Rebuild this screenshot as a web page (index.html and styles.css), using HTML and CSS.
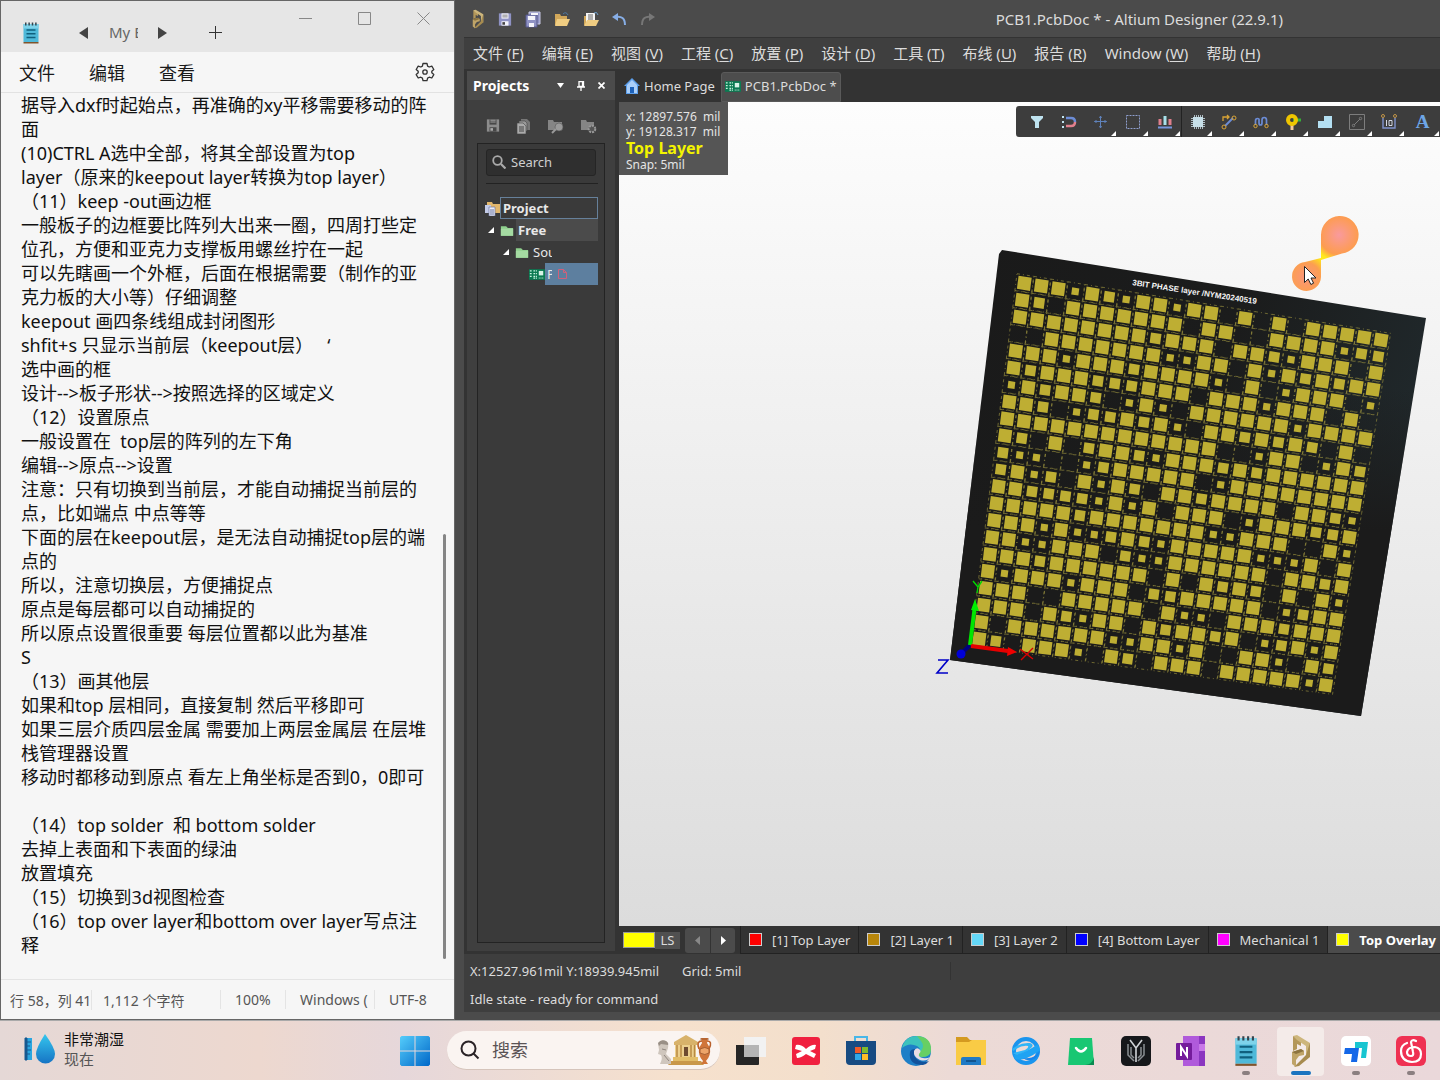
FILE: index.html
```html
<!DOCTYPE html>
<html lang="zh-CN">
<head>
    <meta charset="UTF-8">
    <meta name="viewport" content="width=device-width, initial-scale=1.0">
    <title>PCB1.PcbDoc * - Altium Designer (22.9.1)</title>
    <link rel="stylesheet" href="styles.css">
</head>
<body>

<!-- shared icons -->
<svg class="defs" width="0" height="0">
    <defs>
        <symbol id="i-floppy" viewBox="0 0 16 16"><path d="M1 1h14v14H1z" fill="#8f92c4"/><path d="M4 1h8v6H4z" fill="#f4f4fa"/><path d="M4 10h8v5H4z" fill="#f4f4fa"/><path d="M5 11h3v3H5z" fill="#444"/><path d="M5 3h6M5 5h6" stroke="#777" stroke-width="1"/></symbol>
        <symbol id="i-floppy-gray" viewBox="0 0 16 16"><path d="M1 1h14v14H1z" fill="#8c8c8c"/><path d="M4 1h8v6H4z" fill="#484848"/><path d="M5 2h6M5 4h6" stroke="#aaa"/><path d="M4 10h8v5H4z" fill="#484848"/><path d="M5 11h3v3H5z" fill="#aaa"/></symbol>
        <symbol id="i-altium" viewBox="0 0 24 32"><path d="M4 1l8 3v7l-4-2v5l-4 2z" fill="#b3975a"/><path d="M4 1l4-1 13 8v14l-4-2V11L8 5z" fill="#cdb67c"/><path d="M21 8v14l-11 9-5 1 12-12z" fill="#a78c50"/><path d="M3 17l9-3 3 2v4l-5 1-3 4v7l-4-3z" fill="#bfa468"/><path d="M3 17l9-3 3 2-8 3z" fill="#8c7440"/></symbol>
        <symbol id="i-board" viewBox="0 0 18 14"><path d="M0 1h18v12H0z" fill="#0b7a52"/><path d="M1 3h3M1 6h3M1 9h3M5 3h4M5 6h4M5 9h4M5 11h4" stroke="#c9f5df" stroke-width="1.4" stroke-dasharray="2 1"/><path d="M11 3h5v5h-5z" fill="#d8f3e7"/><path d="M11 11h6" stroke="#fff" stroke-dasharray="1 1"/></symbol>
        <symbol id="i-folder" viewBox="0 0 16 14"><path d="M1 2h6l2 2h6v9H1z" fill="#8fd08d"/><path d="M1 5h14v8H1z" fill="#a5dba2"/></symbol>
        <symbol id="i-notepad" viewBox="0 0 24 32"><path d="M2 4h20v24H2z" fill="#4fb9d9"/><path d="M2 4h20v6H2z" fill="#7ed3ea"/><path d="M2 28h20v2H2z" fill="#80542c"/><path d="M6 12h12M6 17h12M6 22h12" stroke="#10607e" stroke-width="2"/><path d="M5 2v4M9.500 2v4M14 2v4M18.500 2v4" stroke="#33444e" stroke-width="2"/></symbol>
    </defs>
</svg>

<div class="desktop">
    <section class="notepad">
        <header class="np-title">
            <svg class="np-logo" width="18" height="24"><use href="#i-notepad"/></svg>
            <button class="np-btn" aria-label="Previous"><svg width="9" height="12"><path d="M9 0v12L0 6z" fill="#444"/></svg></button>
            <span class="np-tab">My E</span>
            <button class="np-btn" aria-label="Next"><svg width="9" height="12"><path d="M0 0v12l9-6z" fill="#444"/></svg></button>
            <button class="np-btn np-plus" aria-label="New tab"><svg width="13" height="13"><path d="M6.500 0v13M0 6.500h13" stroke="#333"/></svg></button>
            <div class="np-controls">
                <button class="np-btn" aria-label="Minimize"><svg width="13" height="13"><path d="M0 6.500h13" stroke="#888"/></svg></button>
                <button class="np-btn" aria-label="Maximize"><svg width="13" height="13"><path d="M.5.5h12v12H.5z" fill="none" stroke="#888"/></svg></button>
                <button class="np-btn" aria-label="Close"><svg width="13" height="13"><path d="M.5.5l12 12M12.500.5l-12 12" stroke="#888"/></svg></button>
            </div>
        </header>
        <nav class="np-menu">
            <button>文件</button>
            <button>编辑</button>
            <button>查看</button>
            <button class="np-gear" aria-label="Settings"><svg width="20" height="20" viewBox="0 0 20 20" fill="none" stroke="#333" stroke-width="1.3" stroke-linejoin="round"><path d="M8 1.500h4l.6 2.600 1.600.9 2.600-.9 2 3.400-2 1.800v1.500l2 1.800-2 3.400-2.600-.8-1.600.9-.6 2.500H8l-.6-2.500-1.600-.9-2.600.8-2-3.400 2-1.800V9.300l-2-1.800 2-3.400 2.600.9 1.600-.9z"/><circle cx="10" cy="10" r="2.200"/></svg></button>
        </nav>
        <div class="np-body">
            <textarea class="np-text" aria-label="Text" spellcheck="false" wrap="off">据导入dxf时起始点，再准确的xy平移需要移动的阵
面
(10)CTRL A选中全部，将其全部设置为top
layer（原来的keepout layer转换为top layer）
（11）keep -out画边框
一般板子的边框要比阵列大出来一圈，四周打些定
位孔，方便和亚克力支撑板用螺丝拧在一起
可以先瞎画一个外框，后面在根据需要（制作的亚
克力板的大小等）仔细调整
keepout 画四条线组成封闭图形
shfit+s 只显示当前层（keepout层）   ‘
选中画的框
设计--&gt;板子形状--&gt;按照选择的区域定义
（12）设置原点
一般设置在  top层的阵列的左下角
编辑--&gt;原点--&gt;设置
注意：只有切换到当前层，才能自动捕捉当前层的
点，比如端点 中点等等
下面的层在keepout层，是无法自动捕捉top层的端
点的
所以，注意切换层，方便捕捉点
原点是每层都可以自动捕捉的
所以原点设置很重要 每层位置都以此为基准
S
（13）画其他层
如果和top 层相同，直接复制 然后平移即可
如果三层介质四层金属 需要加上两层金属层 在层堆
栈管理器设置
移动时都移动到原点 看左上角坐标是否到0，0即可

（14）top solder  和 bottom solder
去掉上表面和下表面的绿油
放置填充
（15）切换到3d视图检查
（16）top over layer和bottom over layer写点注
释</textarea>
            <div class="np-thumb"></div>
        </div>
        <footer class="np-status">
            <span class="st-pos">行 58，列 41</span>
            <span class="st-count">1,112 个字符</span>
            <span class="st-zoom">100%</span>
            <span class="st-eol">Windows (</span>
            <span class="st-enc">UTF-8</span>
        </footer>
    </section>

    <section class="altium">
        <header class="al-title">
            <div class="al-quick">
                <svg width="14" height="20"><use href="#i-altium"/></svg>
                <button aria-label="Save"><svg width="14" height="15"><use href="#i-floppy"/></svg></button>
                <button aria-label="Save all"><svg width="16" height="17" viewBox="0 0 16 17"><path d="M4 1h11v12H4z" fill="#8f92c4" stroke="#c9cae6"/><path d="M1 4h11v12H1z" fill="#8f92c4" stroke="#55578a"/><path d="M6 2h7v2H6zM3 5h7v4H3zM4 12h5v4H4z" fill="#f4f4fa"/></svg></button>
                <button aria-label="Open"><svg width="16" height="16" viewBox="0 0 16 16"><path d="M1 3h5l1 2h6v9H1z" fill="#d2a85a"/><path d="M3 8h13l-3 7H1z" fill="#f0cd82"/><path d="M9 3q3-3 5 1" fill="none" stroke="#4c7aa5"/></svg></button>
                <button aria-label="Open project"><svg width="16" height="16" viewBox="0 0 16 16"><path d="M1 5h4v9H1z" fill="#d2a85a"/><path d="M3 2h9v9H3z" fill="#f6f6f6"/><path d="M5 4h5M5 6h5M5 8h5" stroke="#666"/><path d="M4 9h12l-3 6H1z" fill="#f0cd82"/><path d="M11 2q3-2 4 2" fill="none" stroke="#6fa2d0"/></svg></button>
                <button aria-label="Undo"><svg width="15" height="13" viewBox="0 0 15 13"><path d="M3 4q10-2 10 8" fill="none" stroke="#87aee6" stroke-width="2"/><path d="M6 0v8L0 4z" fill="#87aee6"/></svg></button>
                <button aria-label="Redo"><svg width="15" height="13" viewBox="0 0 15 13"><path d="M12 4Q2 2 2 12" fill="none" stroke="#777" stroke-width="2"/><path d="M9 0v8l6-4z" fill="#777"/></svg></button>
            </div>
            <span class="al-name">PCB1.PcbDoc * - Altium Designer (22.9.1)</span>
        </header>
        <nav class="al-menu">
            <button>文件 (<u>F</u>)</button>
            <button>编辑 (<u>E</u>)</button>
            <button>视图 (<u>V</u>)</button>
            <button>工程 (<u>C</u>)</button>
            <button>放置 (<u>P</u>)</button>
            <button>设计 (<u>D</u>)</button>
            <button>工具 (<u>T</u>)</button>
            <button>布线 (<u>U</u>)</button>
            <button>报告 (<u>R</u>)</button>
            <button>Window (<u>W</u>)</button>
            <button>帮助 (<u>H</u>)</button>
        </nav>

        <div class="al-work">
            <aside class="panel">
                <div class="panel-head">
                    <h2>Projects</h2>
                    <button aria-label="Panel menu"><svg width="7" height="6"><path d="M0 0h7L3.500 5z" fill="#fff"/></svg></button>
                    <button aria-label="Pin"><svg width="8" height="10"><path d="M2 .5h4.500v5H2zM0 6h8M4 6v4M5.500 1v4" fill="none" stroke="#fff" stroke-width="1.300"/></svg></button>
                    <button aria-label="Close panel"><svg width="7" height="7"><path d="M.5.5l6 6M6.500.5l-6 6" stroke="#fff" stroke-width="1.700"/></svg></button>
                </div>
                <div class="panel-tools">
                    <button aria-label="Save document"><svg width="14" height="15"><use href="#i-floppy-gray"/></svg></button>
                    <button aria-label="Compile"><svg width="14" height="16" viewBox="0 0 14 16"><path d="M5 1h6l3 3v8H5z" fill="#777"/><path d="M3 3h6l2 2v8H3z" fill="#999" stroke="#444" stroke-width=".6"/><path d="M1 5h6l3 3v8H1z" fill="#aaa" stroke="#444" stroke-width=".6"/><path d="M3 9h5M3 11h5M3 13h5" stroke="#444"/></svg></button>
                    <button aria-label="Explore"><svg width="17" height="16" viewBox="0 0 17 16"><path d="M1 2h5l1 2h8v8H1z" fill="#858585"/><circle cx="12" cy="9" r="4" fill="#9a9a9a" stroke="#555" stroke-width=".6"/><path d="M9 11l-4 4" stroke="#999" stroke-width="2"/></svg></button>
                    <button aria-label="Project options"><svg width="17" height="16" viewBox="0 0 17 16"><path d="M1 2h5l1 2h7v8H1z" fill="#858585"/><circle cx="12" cy="11" r="3.300" fill="#555" stroke="#999" stroke-width="2" stroke-dasharray="2 1"/></svg></button>
                </div>
                <div class="tree">
                    <label class="search">
                        <svg width="14" height="14" viewBox="0 0 14 14" fill="none" stroke="#aaa"><circle cx="5.500" cy="5.500" r="4.300" stroke-width="1.800"/><path d="M9 9l4.500 4.500" stroke-width="2.200"/></svg>
                        <input type="text" placeholder="Search" aria-label="Search">
                    </label>
                    <ul class="tree-list">
                        <li class="lv0"><svg width="16" height="15" viewBox="0 0 16 15"><path d="M3 1h5l1 2h7v9H3z" fill="#e2b76c"/><path d="M1 4h6v8H1z" fill="#c3cbe8"/><path d="M5 6h6v9H5z" fill="#e9edfa" stroke="#6d77a0" stroke-width=".7"/><path d="M6 9h4M6 11h4M6 13h4" stroke="#6d77a0"/></svg><b class="node boxed">Project</b></li>
                        <li class="lv1"><svg class="arrow" width="6" height="6"><path d="M6 0v6H0z" fill="#fff"/></svg><svg width="14" height="13"><use href="#i-folder"/></svg><b class="node shaded">Free</b></li>
                        <li class="lv2"><svg class="arrow" width="6" height="6"><path d="M6 0v6H0z" fill="#fff"/></svg><svg width="14" height="13"><use href="#i-folder"/></svg><span class="node"><span class="cut-sou">Sou</span></span></li>
                        <li class="lv3"><svg width="16" height="13"><use href="#i-board"/></svg><span class="node picked"><span class="cut-p">P</span><svg width="9" height="10" viewBox="0 0 9 10"><path d="M.5.5h5l3 3v6h-8zM5.500.5v3h3" fill="none" stroke="#d0607a"/></svg></span></li>
                    </ul>
                </div>
            </aside>

            <main class="editor">
                <div class="doc-tabs">
                    <button class="doc-tab"><svg width="16" height="16" viewBox="0 0 16 16"><path d="M8 0L0 8h2v8h12V8h2z" fill="#5c9fec"/><path d="M8 2L3 7v8h10V7z" fill="#a9cffb"/><path d="M6 9h4v6H6z" fill="#1d62bb"/></svg>Home Page</button>
                    <button class="doc-tab active"><svg width="16" height="13"><use href="#i-board"/></svg>PCB1.PcbDoc *</button>
                </div>
                <div class="view">
                    <svg class="scene" viewBox="619 102 821 824" preserveAspectRatio="xMinYMin meet">
                        <defs>
                            <linearGradient id="boardFill" x1="0" y1="0" x2="1" y2="0.300">
                                <stop offset="0" stop-color="#1a1a1a"/><stop offset=".6" stop-color="#1b1c1c"/><stop offset="1" stop-color="#20282b"/>
                            </linearGradient>
                            <linearGradient id="boardShade" x1="0" y1="0" x2="0" y2="1">
                                <stop offset=".3" stop-color="#1b1b1b" stop-opacity="0"/><stop offset=".6" stop-color="#1b1b1b"/>
                            </linearGradient>
                            <radialGradient id="glow" gradientUnits="userSpaceOnUse" cx="1339" cy="235" r="26"><stop offset="0" stop-color="#f99a9d"/><stop offset=".75" stop-color="#fd9c4e"/><stop offset="1" stop-color="#ffe81c"/></radialGradient>
                            <radialGradient id="glow2" gradientUnits="userSpaceOnUse" cx="1306" cy="277" r="24"><stop offset="0" stop-color="#fa957c"/><stop offset=".6" stop-color="#fc9e52"/><stop offset="1" stop-color="#ffee10"/></radialGradient>
                        </defs>
                        <path d="M1002 250L1426 318 1361 716 950 660 999 254z" fill="url(#boardFill)"/>
                        <path d="M1002 250L1426 318 1361 716 950 660 999 254z" fill="url(#boardShade)"/>
                        <g id="cells"></g>
                        <text class="silk" transform="translate(1132 285) rotate(8.700)">3BIT PHASE layer /NYM20240519</text>
                        <g class="axes">
                            <path d="M970 645L962 653" stroke="#000080" stroke-width="4"/>
                            <circle cx="961" cy="654" r="4.500" fill="#0000d8"/>
                            <path d="M970 645L974.500 609" stroke="#00e600" stroke-width="4"/><path d="M971 610l4-11 4 12z" fill="#00f000"/>
                            <path d="M971 646L1008 651" stroke="#e60000" stroke-width="4"/><path d="M1008 647l9 5-10 4z" fill="#f00000"/>
                            <path d="M973 581l5 6 4-6M978 587l-1 6" stroke="#00d800" fill="none" stroke-width="1.400"/>
                            <path d="M1020 649l13 10M1033 648l-12 12" stroke="#d80000" fill="none" stroke-width="1.400"/>
                            <path d="M938 660h10l-11 13h11" stroke="#0000c8" fill="none" stroke-width="1.600"/>
                        </g>
                        <path d="M1321 260V235A18.800 18.800 0 1 1 1342 253.500z" fill="url(#glow)"/>
                        <path d="M1321 258V277A14.500 14.500 0 1 1 1305 262z" fill="url(#glow2)"/>
                        <path d="M1304.500 266.500v16l3.700-3.500 2.700 5.500 2.700-1.300-2.600-5.200h5z" fill="#fff" stroke="#222"/>
                    </svg>
                    <div class="hud">
                        <p>x: 12897.576&nbsp; mil</p>
                        <p>y: 19128.317&nbsp; mil</p>
                        <strong>Top Layer</strong>
                        <p>Snap: 5mil</p>
                    </div>
                    <div class="active-bar">
                        <button aria-label="Filter"><svg viewBox="0 0 16 16"><path d="M2 2h12v2l-4 4v6H6V8L2 4z" fill="#bfe3f0"/></svg></button>
                        <button aria-label="Snap"><svg viewBox="0 0 16 16"><path d="M5 4h5q4 0 4 4" stroke="#6c8cd5" stroke-width="2.500" fill="none"/><path d="M5 12h5q4 0 4-4" stroke="#e07f8c" stroke-width="2.500" fill="none"/><path d="M1 3h2M1 8h2M1 13h2" stroke="#bfe3f0" stroke-width="2"/></svg></button>
                        <button class="more" aria-label="Move"><svg viewBox="0 0 16 16"><path d="M7.500 2v12M1.500 7.500h12M6.500 4l1-2 1 2M6.500 12l1 2 1-2M3.500 6.500l-2 1 2 1M11.500 6.500l2 1-2 1" stroke="#5f82bb" fill="none"/></svg></button>
                        <button class="more" aria-label="Select"><svg viewBox="0 0 16 16"><path d="M1.500 1.500h13v13h-13z" stroke="#8f9fce" fill="none" stroke-dasharray="2 1"/></svg></button>
                        <button class="more" aria-label="Align"><svg viewBox="0 0 16 16"><path d="M3 5v6M13 5v6" stroke="#e07f8c" stroke-width="3"/><path d="M8 2v9" stroke="#a9e0ea" stroke-width="3"/><path d="M1 13.500h14" stroke="#7695dc" stroke-width="2"/></svg></button>
                        <button class="more split" aria-label="Component"><svg viewBox="0 0 16 16" shape-rendering="crispEdges"><path d="M4 1v14M6 1v14M8 1v14M10 1v14M12 1v14M1 4h14M1 6h14M1 8h14M1 10h14M1 12h14" stroke="#aebcc3" stroke-width="1"/><path d="M3 3h10v10H3z" fill="#c7dfe8"/></svg></button>
                        <button class="more" aria-label="Route"><svg viewBox="0 0 16 16" fill="none"><path d="M4 12l8-8" stroke="#6c8cd5" stroke-width="2"/><circle cx="3" cy="13" r="2" stroke="#d9a436"/><circle cx="13" cy="4" r="2" stroke="#d9a436"/><path d="M2 7V3h6M6 1l2 2-2 2" stroke="#d9a436" stroke-width="1.300"/></svg></button>
                        <button class="more" aria-label="Tune"><svg viewBox="0 0 16 16" fill="none"><path d="M2.500 11V7q0-2.500 2-2.500t1.500 2V9q0 2 1.500 2T9 9V6q0-2.500 2.200-2.500T13.500 6v5" stroke="#6c8cd5" stroke-width="1.700"/><circle cx="2.500" cy="12" r="1.700" stroke="#d9a436"/><circle cx="13.500" cy="12" r="1.700" stroke="#d9a436"/></svg></button>
                        <button class="more" aria-label="Via"><svg viewBox="0 0 16 16"><path d="M8 6h8" stroke="#35b136" stroke-width="3"/><path d="M7 8v8" stroke="#f3c99b" stroke-width="3"/><circle cx="7" cy="6" r="4" fill="none" stroke="#efc500" stroke-width="4"/></svg></button>
                        <button class="more" aria-label="Polygon"><svg viewBox="0 0 16 16"><path d="M7 2h8v12H1V7h6z" fill="#b3dff2"/></svg></button>
                        <button class="more" aria-label="Room"><svg viewBox="0 0 16 16" fill="none" stroke="#7d7d7d"><path d="M.5.5h15v15H.5z"/><path d="M5 11l6-6"/><circle cx="4.500" cy="11.500" r="1.200"/><circle cx="11.500" cy="4.500" r="1.200"/></svg></button>
                        <button class="more" aria-label="Dimension"><svg viewBox="0 0 16 16" fill="none"><path d="M2 4v10h12V4" stroke="#8093cc" stroke-width="1.400"/><circle cx="2" cy="2" r="1.500" stroke="#c29549"/><circle cx="14" cy="2" r="1.500" stroke="#c29549"/><path d="M5.500 6v6M8 6.500h3v5H8z" stroke="#d5d9e6"/></svg></button>
                        <button class="more letter">A</button>
                    </div>
                </div>
                <div class="layers">
                    <span class="cur-layer"></span>
                    <button class="ls">LS</button>
                    <div class="layer-nav">
                        <button aria-label="Previous layer"><svg width="5" height="9"><path d="M5 0v9L0 4.500z" fill="#888"/></svg></button>
                        <button aria-label="Next layer"><svg width="5" height="9"><path d="M0 0v9l5-4.500z" fill="#fff"/></svg></button>
                    </div>
                    <button class="layer"><i class="sw red"></i>[1] Top Layer</button>
                    <button class="layer"><i class="sw brown"></i>[2] Layer 1</button>
                    <button class="layer"><i class="sw sky"></i>[3] Layer 2</button>
                    <button class="layer"><i class="sw blue"></i>[4] Bottom Layer</button>
                    <button class="layer"><i class="sw pink"></i>Mechanical 1</button>
                    <button class="layer active"><i class="sw yellow"></i>Top Overlay</button>
                </div>
            </main>
        </div>

        <footer class="al-status">
            <div class="al-coords"><span class="xy">X:12527.961mil Y:18939.945mil</span><span class="grid">Grid: 5mil</span></div>
            <div>Idle state - ready for command</div>
        </footer>
    </section>
</div>

<footer class="taskbar">
    <div class="weather">
        <svg width="31" height="32" viewBox="0 0 31 32"><defs><linearGradient id="drop" x1="0" y1="0" x2="0" y2="1"><stop offset="0" stop-color="#35c6ee"/><stop offset="1" stop-color="#1674c4"/></linearGradient></defs><path d="M1 5h7v22H1z" fill="#2aa6e0"/><path d="M1 5h2v22H1zM3 9h4M3 13h3M3 17h4M3 21h3" fill="#17588f" stroke="#17588f"/><path d="M21 1q10 14 10 20a9.500 9.500 0 0 1-19 0Q12 15 21 1z" fill="url(#drop)"/></svg>
        <div><p>非常潮湿</p><p class="dim">现在</p></div>
    </div>
    <button class="start" aria-label="Start"><svg width="30" height="30" viewBox="0 0 30 30"><defs><linearGradient id="win" x1="0" y1="0" x2="1" y2="1"><stop offset="0" stop-color="#55cdfb"/><stop offset="1" stop-color="#0067c8"/></linearGradient></defs><path d="M1.500 0H14.500V14.500H0V1.500zM15.500 0H28.500L30 1.500V14.500H15.500zM0 15.500H14.500V30H1.500L0 28.500zM15.500 15.500H30V28.500L28.500 30H15.500z" fill="url(#win)"/></svg></button>
    <label class="find">
        <svg width="20" height="20" viewBox="0 0 20 20" fill="none" stroke="#2a2326" stroke-width="2"><circle cx="8.500" cy="8.500" r="7"/><path d="M13.500 13.500l5 5"/></svg>
        <input type="text" placeholder="搜索" aria-label="搜索">
        <svg width="56" height="30" viewBox="0 0 56 30"><path d="M15 26h30l3 4H12z" fill="#c9984b"/><path d="M17 22h25v4H17z" fill="#e2bd69"/><path d="M18 7L30 0l12 7v3H18z" fill="#d8b26a"/><path d="M19 10h21v12H19z" fill="#eccf8e"/><path d="M21 10v12M25 10v12M35 10v12M38.500 10v12" stroke="#b98a43" stroke-width="1.500"/><path d="M28 12h4v9h-4z" fill="#6e4a30"/><path d="M2 8q3-4 8-2 3 2 2 7l-2 6 5 5v5H4q3-6 1-9l-3-1 1-4z" fill="#cfc6bd"/><path d="M2 8q3-4 8-2 3 2 2 4L5 9 3 11z" fill="#998f86"/><path d="M6 14l4 1M8 20l5 6" stroke="#90867f"/><path d="M45 3h7l-1 5 3 5q1 8-4 13l2 3h-7l2-3q-5-5-4-13l3-5z" fill="#d0753a"/><path d="M43 14q-3-8 3-8M53 14q4-8-2-8" fill="none" stroke="#b9602c" stroke-width="1.500"/><path d="M44 14q5-3 9 0v4q-4 3-9 0zM44 4h9" fill="#eda469" stroke="#8b4722" stroke-width=".7"/></svg>
    </label>
    <div class="apps">
        <button aria-label="Task view"><svg width="30" height="30" viewBox="0 0 30 30"><path d="M0 9h23v19q0 1-1 1H1q-1 0-1-1z" fill="#262626"/><path d="M8 1h22v20H8z" fill="#f2f2f2"/><path d="M8 9h15v12H8z" fill="#b5b5b5"/></svg></button>
        <button aria-label="Xmind"><svg width="30" height="30" viewBox="0 0 30 30"><rect x="1" y="1" width="28" height="28" rx="3" fill="#f0203f"/><path d="M5 9q5-1 10 4 6-5 10-4l-1 4-5 2 6 3-2 4q-4-2-8-4-5 4-9 4l-1-4 6-3-7-2z" fill="#fff"/></svg></button>
        <button aria-label="Store"><svg width="30" height="30" viewBox="0 0 30 30"><path d="M9 6V1h12v5" fill="none" stroke="#49b7e8" stroke-width="2"/><path d="M0 5h30v20q0 4-4 4H4q-4 0-4-4z" fill="#174b82"/><path d="M9 11h6v6H9z" fill="#f05a28"/><path d="M16 11h6v6h-6z" fill="#7fbb2c"/><path d="M9 18h6v6H9z" fill="#2fa8e8"/><path d="M16 18h6v6h-6z" fill="#fdbd28"/></svg></button>
        <button aria-label="Edge"><svg width="30" height="32" viewBox="0 0 30 32"><circle cx="15" cy="16" r="15" fill="#1e7fc7"/><path d="M1 13Q4 1 16 1t14 13q0 8-9 8-5-1-3-4 3-4-2-7-8-4-15 2z" fill="#3cc2bd"/><path d="M16 1q14 1 14 13 0 8-9 8-5-1-3-4 7-6 2-12z" fill="#67cf63"/><path d="M9 17q-2 13 13 13 4-1 6-4-9 3-14-4-2-3 0-8-4 0-5 3z" fill="#12529b"/><path d="M13 16q2-4 5-2 3 2 0 5-1 3 4 4 4 1 7-1-3 5-10 3-7-3-6-9z" fill="#e9dce4"/></svg></button>
        <button aria-label="Explorer"><svg width="32" height="30" viewBox="0 0 32 30"><path d="M1 1h11l3 3h16v10H1z" fill="#d49a20"/><path d="M1 6h13l3-2h14v25H1z" fill="#f9cb45"/><path d="M6 29v-6q0-2 2-2h16q2 0 2 2v6z" fill="#1f7ac5"/><path d="M11 25h10" stroke="#11548f" stroke-width="2"/></svg></button>
        <button aria-label="Browser"><svg width="28" height="30" viewBox="0 0 28 30"><circle cx="14" cy="15" r="12" fill="none" stroke="#1a95ee" stroke-width="4"/><path d="M0 13Q9 6 18 7q4 1 2 4-5 6-16 8l-3-2 12-3q4-2 3-4-7-1-15 5z" fill="#2fb5f8"/><path d="M2 19q10-1 24-11l2 6q-6 5-13 8-7 3-12 1z" fill="#1fa3f3"/><path d="M24 19l4-4q-2 7-8 9-6 1-9-2 8 1 13-3z" fill="#1684ea"/></svg></button>
        <button aria-label="Mall"><svg width="26" height="30" viewBox="0 0 26 30"><path d="M2 2h22l2 27H0z" fill="#18c773"/><path d="M26 21v8h-9q8-1 9-8z" fill="#0a8a50"/><path d="M8 12q5 7 10 0" fill="none" stroke="#fff" stroke-width="2.500" stroke-linecap="round"/></svg></button>
        <button aria-label="Game"><svg width="30" height="30" viewBox="0 0 30 30"><rect width="30" height="30" rx="5" fill="#16181b"/><path d="M9 4l6 8 6-8M15 12v14" fill="none" stroke="#d0d4d7" stroke-width="1.600"/><path d="M7 8v11l6 6M23 8v11l-6 6M10 11v8l3 3M20 11v8l-3 3" fill="none" stroke="#8b9094" stroke-width="1.500"/></svg></button>
        <button aria-label="OneNote"><svg width="30" height="32" viewBox="0 0 30 32"><path d="M7 1h22v30H7z" fill="#b05adb"/><path d="M23 1h6v30h-6z" fill="#8b36c0"/><path d="M23 9h6v7h-6z" fill="#c878e8"/><rect y="8" width="16" height="17" rx="1" fill="#741b9b"/><path d="M5 21v-9l6 9v-9" fill="none" stroke="#fff" stroke-width="2"/></svg></button>
        <button class="running" aria-label="Notepad"><svg width="26" height="34"><use href="#i-notepad"/></svg></button>
        <button class="running current" aria-label="Altium"><svg width="24" height="32"><use href="#i-altium"/></svg></button>
        <button class="running" aria-label="ToDesk"><svg width="30" height="32" viewBox="0 0 30 32"><rect y="1" width="30" height="30" rx="5" fill="#fff"/><path d="M14 7h13l-2 16h-5l1-10h-7z" fill="#18c5d1"/><path d="M4 13h14l-2 14h-6l1-8H3z" fill="#1467e8"/></svg></button>
        <button class="running" aria-label="Music"><svg width="30" height="32" viewBox="0 0 30 32"><rect y="1" width="30" height="30" rx="6" fill="#ef3152"/><path d="M20 6q-4-2-5 1l2 10q1 4-2 4-4 0-4-4 1-5 8-5 6 1 6 7 0 8-9 8-11-1-11-11 0-6 6-8" fill="none" stroke="#fff" stroke-width="2.200" stroke-linecap="round"/></svg></button>
    </div>
</footer>

<script src="script.js"></script>
</body>
</html>
```
FILE: styles.css
```css
* {
    box-sizing: border-box;
}
body {
    margin: 0;
    height: 100vh;
    display: flex;
    flex-direction: column;
    overflow: hidden;
    font-family: "Noto Sans", "Noto Sans CJK SC", sans-serif;
    font-size: 13px;
    background: #4b4b4b;
}
button {
    font: inherit;
    color: inherit;
    background: none;
    border: none;
    padding: 0;
    display: flex;
    align-items: center;
    justify-content: center;
    white-space: nowrap;
}
p, h2, ul {
    margin: 0;
    padding: 0;
    list-style: none;
}
svg {
    flex: none;
    display: block;
}
.defs {
    position: absolute;
}
.desktop {
    flex: 1;
    min-height: 0;
    display: flex;
}

/* Notepad */
.notepad {
    width: 455px;
    flex: none;
    display: flex;
    flex-direction: column;
    background: #f6f6f6;
    border: 1px solid #666;
}
.np-title {
    height: 51px;
    flex: none;
    display: flex;
    align-items: center;
    padding: 12px 24px 0 21px;
    background: #e6e6e6;
}
.np-logo {
    margin-right: 39px;
}
.np-tab {
    width: 29px;
    margin: 0 20px 0 21px;
    padding-bottom: 2px;
    overflow: hidden;
    white-space: nowrap;
    font-size: 15px;
    color: #666;
}
.np-plus {
    margin-left: 42px;
}
.np-controls {
    display: flex;
    gap: 46px;
    margin-left: auto;
    padding-bottom: 28px;
}
.np-menu {
    height: 41px;
    flex: none;
    display: flex;
    align-items: center;
    gap: 34px;
    padding: 0 19px 0 18px;
    border-bottom: 1px solid #e2e2e2;
    font-size: 18px;
    color: #1a1a1a;
}
.np-gear {
    margin-left: auto;
}
.np-body {
    flex: 1;
    min-height: 0;
    display: flex;
    position: relative;
}
.np-text {
    flex: 1;
    padding: 0 0 0 20px;
    border: none;
    outline: none;
    resize: none;
    overflow: hidden;
    background: none;
    font-family: inherit;
    font-size: 18px;
    line-height: 24px;
    color: #111;
}
.np-thumb {
    position: absolute;
    right: 8px;
    bottom: 20px;
    width: 3px;
    height: 48%;
    border-radius: 2px;
    background: #858585;
}
.np-status {
    height: 40px;
    flex: none;
    display: flex;
    align-items: center;
    border-top: 1px solid #e4e4e4;
    font-size: 14px;
    color: #555;
}
.np-status span {
    padding-left: 14px;
    border-left: 1px solid #e4e4e4;
    overflow: hidden;
    white-space: nowrap;
}
.np-status .st-pos {
    width: 81px;
    padding: 0;
    margin-left: 9px;
    border: none;
}
.np-status .st-count {
    width: 129px;
    padding-left: 11px;
}
.st-zoom {
    width: 65px;
}
.st-eol {
    width: 89px;
}

/* Altium window */
.altium {
    flex: 1;
    min-width: 0;
    display: flex;
    flex-direction: column;
    padding: 1px 0 8px 9px;
    background: #4b4b4b;
    color: #dcdcdc;
}
.al-title {
    height: 36px;
    flex: none;
    display: flex;
    align-items: center;
}
.al-quick {
    display: flex;
    align-items: center;
    gap: 13px;
    padding-left: 7px;
}
.al-name {
    flex: 1;
    padding-right: 157px;
    text-align: right;
    font-size: 15px;
}
.al-menu {
    height: 32px;
    flex: none;
    display: flex;
    align-items: center;
    gap: 18px;
    padding: 0 0 2px 9px;
    background: #3f3f3f;
    border-top: 1px solid #333;
    font-size: 15px;
}
.al-menu u {
    text-underline-offset: 2px;
}
.al-work {
    flex: 1;
    min-height: 0;
    display: flex;
    background: #333;
}
.panel {
    width: 148px;
    flex: none;
    display: flex;
    flex-direction: column;
    margin: 2px 4px 3px 3px;
    background: #3f3f3f;
}
.panel-head {
    height: 29px;
    flex: none;
    display: flex;
    align-items: center;
    gap: 13px;
    padding: 0 10px 0 6px;
    background: #4b4b4b;
    color: #fff;
}
.panel-head h2 {
    margin-right: auto;
    font-size: 14px;
}
.panel-tools {
    height: 43px;
    flex: none;
    display: flex;
    align-items: center;
    justify-content: space-between;
    padding: 8px 18px 0 19px;
}
.tree {
    flex: 1;
    margin: 0 10px 8px;
    padding: 5px 6px 0 8px;
    border: 1px solid #232323;
    background: #3a3a3a;
}
.search {
    height: 27px;
    display: flex;
    align-items: center;
    gap: 3px;
    margin-right: 2px;
    padding: 0 5px 2px;
    border: 1px solid #252525;
    border-radius: 3px;
    background: #2f2f2f;
}
.search input, .find input {
    flex: 1;
    min-width: 0;
    border: none;
    outline: none;
    background: none;
    font: inherit;
    color: inherit;
}
.search input::placeholder {
    color: #d0d0d0;
}
.tree-list {
    margin-top: 7px;
    padding-top: 13px;
    border-top: 1px solid #222;
}
.tree-list li {
    height: 22px;
    display: flex;
    align-items: center;
}
.lv0 {
    margin-left: -2px;
}
.lv1 {
    padding-left: 2px;
}
.lv2 {
    padding-left: 17px;
}
.lv3 {
    padding-left: 43px;
}
.arrow {
    margin-right: 6px;
}
.node {
    flex: 1;
    height: 22px;
    display: flex;
    align-items: center;
    padding-left: 2px;
    color: #e8e8e8;
}
.boxed {
    border: 1px solid #66809a;
}
.shaded {
    background: #4b4b4b;
}
.lv1 .node, .lv2 .node {
    margin-left: 2px;
}
.picked {
    gap: 6px;
    background: #5d7f9f;
}
.cut-sou {
    width: 19px;
    overflow: hidden;
}
.cut-p {
    width: 5px;
    overflow: hidden;
}
.editor {
    flex: 1;
    min-width: 0;
    display: flex;
    flex-direction: column;
}
.doc-tabs {
    height: 33px;
    flex: none;
    display: flex;
    align-items: flex-end;
}
.doc-tab {
    height: 30px;
    gap: 4px;
    padding: 0 6px 2px 5px;
    border-radius: 3px 3px 0 0;
}
.doc-tab.active {
    background: #4d4d4d;
    border: 1px solid #5a5a5a;
    padding: 0 3px 2px;
}
.view {
    flex: 1;
    min-height: 0;
    position: relative;
    background: linear-gradient(#fdfdfd, #dcdcdc);
}
.scene {
    width: 100%;
    height: 100%;
}
.silk {
    font: bold 8px "Liberation Sans", Arial, sans-serif;
    fill: #f4f4f4;
}
.cell {
    fill: #beae33;
}
.cell-edge {
    fill: none;
    stroke: #a3983f;
    stroke-width: .6;
    stroke-dasharray: 3 3 1 3;
}
.hud {
    position: absolute;
    top: 0;
    left: 0;
    width: 109px;
    height: 73px;
    padding: 7px 0 0 7px;
    background: #555;
    color: #e4e4e4;
    font-size: 12px;
    line-height: 15px;
    white-space: nowrap;
}
.hud strong {
    display: block;
    font-size: 16px;
    line-height: 18px;
    color: #f4f400;
}
.active-bar {
    position: absolute;
    top: 4px;
    right: 0;
    height: 31px;
    display: flex;
    padding-left: 5px;
    border-radius: 3px 0 0 3px;
    background: #3d3d3d;
}
.active-bar button {
    width: 32px;
    position: relative;
}
.active-bar button:last-child {
    width: 35px;
}
.active-bar svg {
    width: 16px;
    height: 16px;
}
.active-bar .more::after {
    content: "";
    position: absolute;
    right: 1px;
    bottom: 1px;
    border-left: 5px solid transparent;
    border-bottom: 5px solid #fff;
}
.active-bar .split {
    border-left: 1px solid #222;
}
.active-bar .letter {
    font: bold 19px "Liberation Serif", serif;
    color: #6ea6e6;
}
.layers {
    height: 28px;
    flex: none;
    display: flex;
    align-items: center;
    padding-left: 4px;
    overflow: hidden;
}
.cur-layer {
    width: 32px;
    height: 16px;
    flex: none;
    background: #ff0;
    border: 1px solid #999;
}
.ls {
    width: 25px;
    height: 17px;
    flex: none;
    margin-right: 5px;
    background: #505050;
}
.layer-nav {
    height: 25px;
    flex: none;
    display: flex;
    margin-right: 5px;
    border-radius: 3px;
    background: #4b4b4b;
}
.layer-nav button {
    width: 25px;
}
.layer-nav button + button {
    border-left: 1px solid #333;
}
.layer {
    height: 28px;
    flex: none;
    gap: 10px;
    padding: 0 8px;
    border-left: 1px solid #222;
    border-bottom: 1px solid #222;
}
.layer.active {
    background: #4b4b4b;
    color: #fff;
    font-weight: bold;
}
.sw {
    width: 13px;
    height: 13px;
    border: 1px solid #ccc;
}
.red { background: #f00; }
.brown { background: #b8860b; }
.sky { background: #64d8f8; }
.blue { background: #00f; }
.pink { background: #f0f; }
.yellow { background: #ff0; }
.al-status {
    height: 58px;
    flex: none;
    display: flex;
    flex-direction: column;
    justify-content: space-between;
    padding: 8px 0 4px 6px;
    background: #3e3e3e;
}
.al-coords {
    display: flex;
}
.xy {
    width: 212px;
}
.grid {
    width: 269px;
    border-right: 1px solid #333;
}

/* Windows taskbar */
.taskbar {
    height: 60px;
    flex: none;
    display: flex;
    align-items: center;
    border-top: 1px solid #aaa;
    background: linear-gradient(90deg, #e5d8d6, #edd8cf 18%, #e6d7da 28%, #f6e1cd 47%, #f3dfcc 57%, #ecdad6 66%, #ead8da);
}
.weather {
    width: 377px;
    display: flex;
    align-items: center;
    gap: 9px;
    padding: 0 0 3px 24px;
    font-size: 15px;
    line-height: 20px;
    color: #111;
}
.dim {
    color: #555;
}
.start {
    width: 70px;
    padding-left: 6px;
}
.find {
    width: 273px;
    height: 39px;
    flex: none;
    display: flex;
    align-items: center;
    gap: 10px;
    padding: 0 8px 0 13px;
    border-radius: 20px;
    background: #faf4f1;
    border-bottom: 1px solid #d5c4bb;
    font-size: 18px;
}
.find input::placeholder {
    color: #5a5355;
}
.apps {
    flex: 1;
    display: flex;
    padding-left: 3px;
}
.apps button {
    width: 55px;
    height: 60px;
    flex: none;
    position: relative;
}
.apps .current::before {
    content: "";
    position: absolute;
    inset: 6px 4px 5px 4px;
    border-radius: 4px;
    background: #f4ebe9;
}
.apps svg {
    position: relative;
}
.running::after {
    content: "";
    position: absolute;
    bottom: 6px;
    width: 8px;
    height: 4px;
    border-radius: 2px;
    background: #8b7f80;
}
.current::after {
    width: 20px;
    background: #1b74c0;
}
```
FILE: script.js
```js
// patch size per cell: 0 = none, 1 = small, 2 = medium, 3 = large
const rows = [
    "3331321331330303033333",
    "3203333333033003333122",
    "3333333323330332133303",
    "0033333331133031323233",
    "3331333233331030133301",
    "3233322233303331333030",
    "1323320131033333313333",
    "3320122323103323232030",
    "3333333333333001330132",
    "3203023321333232333333",
    "2110012333330133333333",
    "2312031320332333303321",
    "3322221313033301333223",
    "3333323333333113330031",
    "3331311232133333111303",
    "3311333021133333303323",
    "3332333333030323203031",
    "3133313330223333301233",
    "3330033333031103332333",
    "3330321330323323012313",
    "3033333311331300331032",
    "3203331032033303333313"
];
const half = [0, 0.21, 0.31, 0.385];

// centres of the four corner cells
const tl = [1024.3, 283.3], tr = [1381, 340];
const bl = [979.3, 639], br = [1325.7, 685.3];

function project(c, r) {
    const u = c / 21, v = r / 21;
    return [0, 1].map(i =>
        (tl[i] * (1 - u) + tr[i] * u) * (1 - v) + (bl[i] * (1 - u) + br[i] * u) * v
    );
}

function square(c, r, h, cls) {
    const el = document.createElementNS("http://www.w3.org/2000/svg", "polygon");
    const pts = [[-h, -h], [h, -h], [h, h], [-h, h]];
    el.setAttribute("points", pts.map(p => project(c + p[0], r + p[1]).map(n => n.toFixed(1)).join(",")).join(" "));
    el.setAttribute("class", cls);
    document.getElementById("cells").appendChild(el);
}

rows.forEach((row, r) => {
    [...row].forEach((size, c) => {
        square(c, r, 0.49, "cell-edge");
        if (size > 0) square(c, r, half[size], "cell");
    });
});
```
